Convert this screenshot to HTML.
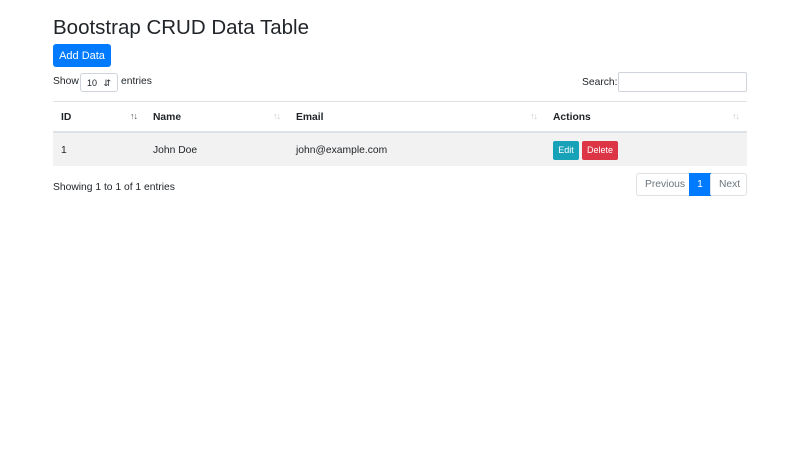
<!DOCTYPE html>
<html><head><style>
body{margin:0;background:#fff;font-family:"Liberation Sans",sans-serif;color:#212529;font-size:10.3px;}
h1{position:absolute;left:53px;top:15px;margin:0;font-weight:400;font-size:20.5px;line-height:26px;}
.btn{position:absolute;color:#fff;border-radius:3px;text-align:center;}
.abs{position:absolute;}
table{position:absolute;left:53px;top:101px;width:694px;border-collapse:collapse;}
th{height:27px;text-align:left;padding:2px 8px 0;border-top:1px solid #dee2e6;border-bottom:2px solid #dee2e6;font-weight:700;position:relative;}
td{height:32px;padding:1px 8px 0;background:#f2f2f2;}
.s{position:absolute;right:8px;top:9px;color:#c8c8c8;font-size:9px;letter-spacing:-1px;}
.b{display:inline-block;color:#fff;border-radius:2px;height:19px;line-height:19px;font-size:9px;text-align:center;vertical-align:middle;}
</style></head><body>
<h1>Bootstrap CRUD Data Table</h1>
<div class="btn" style="left:53px;top:44px;width:58px;height:23px;line-height:24px;background:#007bff;font-size:11px;">Add Data</div>
<div class="abs" style="left:53px;top:76px;">Show</div>
<div class="abs" style="left:80px;top:73px;width:38px;height:19px;border:1px solid #ced4da;border-radius:3px;font-size:9px;line-height:19px;box-sizing:border-box;padding-left:6px;">10 <span style="position:absolute;right:6px;">&#8693;</span></div>
<div class="abs" style="left:121px;top:76px;">entries</div>
<div class="abs" style="left:582px;top:77px;">Search:</div>
<div class="abs" style="left:618px;top:72px;width:129px;height:20px;border:1px solid #ced4da;border-radius:2px;box-sizing:border-box;"></div>
<table>
<tr><th style="width:76px">ID<span class="s" style="color:#555">↑↓</span></th><th style="width:127px">Name<span class="s">↑↓</span></th><th style="width:241px">Email<span class="s">↑↓</span></th><th>Actions<span class="s">↑↓</span></th></tr>
<tr><td>1</td><td>John Doe</td><td>john@example.com</td><td><span class="b" style="background:#17a2b8;width:26px;">Edit</span><span class="b" style="background:#dc3545;width:36px;margin-left:3px;">Delete</span></td></tr>
</table>
<div class="abs" style="left:53px;top:182px;">Showing 1 to 1 of 1 entries</div>
<div class="abs" style="left:636px;top:173px;width:111px;height:23px;border:1px solid #dee2e6;border-radius:3px;box-sizing:border-box;color:#6c757d;line-height:22px;">
<span class="abs" style="left:8px;">Previous</span>
<span class="abs" style="left:52px;top:-1px;width:22px;height:23px;background:#007bff;color:#fff;text-align:center;line-height:23px;">1</span>
<span class="abs" style="left:82px;">Next</span>
<span class="abs" style="left:73px;top:0;width:1px;height:21px;background:#dee2e6"></span>
</div>
</body></html>
